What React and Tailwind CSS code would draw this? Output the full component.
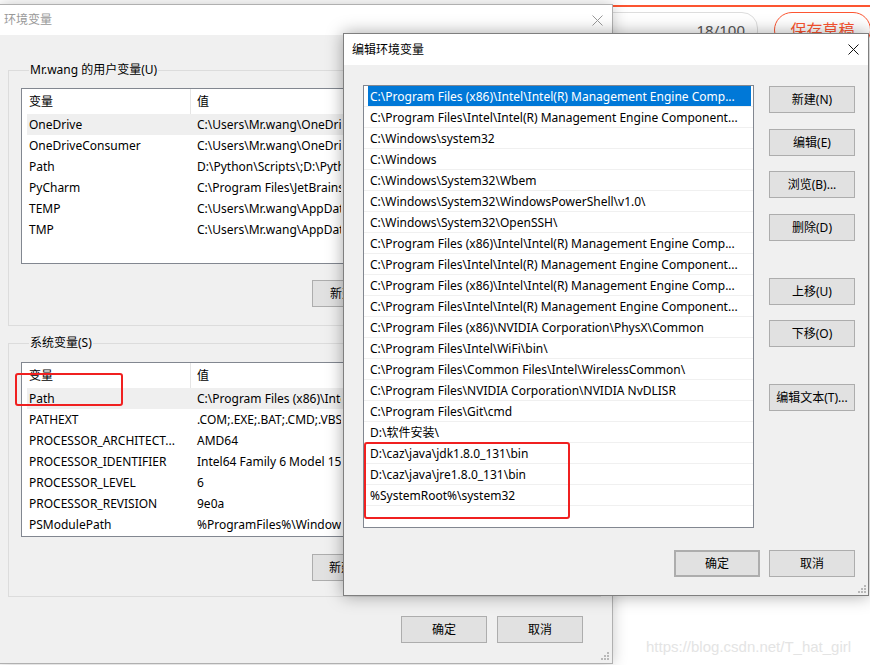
import React from "react";

const FONT = "font-['Noto_Sans','Noto_Sans_CJK_SC',sans-serif]";

const frontPaths = [
  "C:\\Program Files (x86)\\Intel\\Intel(R) Management Engine Comp...",
  "C:\\Program Files\\Intel\\Intel(R) Management Engine Component...",
  "C:\\Windows\\system32",
  "C:\\Windows",
  "C:\\Windows\\System32\\Wbem",
  "C:\\Windows\\System32\\WindowsPowerShell\\v1.0\\",
  "C:\\Windows\\System32\\OpenSSH\\",
  "C:\\Program Files (x86)\\Intel\\Intel(R) Management Engine Comp...",
  "C:\\Program Files\\Intel\\Intel(R) Management Engine Component...",
  "C:\\Program Files (x86)\\Intel\\Intel(R) Management Engine Comp...",
  "C:\\Program Files\\Intel\\Intel(R) Management Engine Component...",
  "C:\\Program Files (x86)\\NVIDIA Corporation\\PhysX\\Common",
  "C:\\Program Files\\Intel\\WiFi\\bin\\",
  "C:\\Program Files\\Common Files\\Intel\\WirelessCommon\\",
  "C:\\Program Files\\NVIDIA Corporation\\NVIDIA NvDLISR",
  "C:\\Program Files\\Git\\cmd",
  "D:\\软件安装\\",
  "D:\\caz\\java\\jdk1.8.0_131\\bin",
  "D:\\caz\\java\\jre1.8.0_131\\bin",
  "%SystemRoot%\\system32",
];

const userVars = [
  ["OneDrive", "C:\\Users\\Mr.wang\\OneDrive"],
  ["OneDriveConsumer", "C:\\Users\\Mr.wang\\OneDrive"],
  ["Path", "D:\\Python\\Scripts\\;D:\\Python\\;"],
  ["PyCharm", "C:\\Program Files\\JetBrains\\PyCharm 2019.1\\bin;"],
  ["TEMP", "C:\\Users\\Mr.wang\\AppData\\Local\\Temp"],
  ["TMP", "C:\\Users\\Mr.wang\\AppData\\Local\\Temp"],
];

const sysVars = [
  ["Path", "C:\\Program Files (x86)\\Intel\\Intel(R) Management"],
  ["PATHEXT", ".COM;.EXE;.BAT;.CMD;.VBS;.VBE;.JS;.JSE;.WSF"],
  ["PROCESSOR_ARCHITECT...", "AMD64"],
  ["PROCESSOR_IDENTIFIER", "Intel64 Family 6 Model 158 Stepping 10"],
  ["PROCESSOR_LEVEL", "6"],
  ["PROCESSOR_REVISION", "9e0a"],
  ["PSModulePath", "%ProgramFiles%\\WindowsPowerShell\\Modules"],
];

function WinButton({ children, className = "" }) {
  return (
    <div
      className={`w-[86px] h-[27px] flex items-center justify-center bg-[#e1e1e1] border border-[#adadad] text-[12px] text-black shrink-0 ${className}`}
    >
      {children}
    </div>
  );
}

function CloseX({ color }) {
  return (
    <svg width="11" height="11" viewBox="0 0 11 11">
      <path d="M0.5 0.5 L10.5 10.5 M10.5 0.5 L0.5 10.5" stroke={color} strokeWidth="1" />
    </svg>
  );
}

function Grip() {
  const dots = [
    [6, 0],
    [3, 3],
    [6, 3],
    [0, 6],
    [3, 6],
    [6, 6],
  ];
  return (
    <svg width="8" height="8" viewBox="0 0 8 8">
      {dots.map(([x, y], i) => (
        <rect key={i} x={x} y={y} width="2" height="2" fill="#b8b8b8" />
      ))}
    </svg>
  );
}

function VarList({ rows, height }) {
  return (
    <div className={`w-[563px] ${height} border border-[#828790] bg-white overflow-hidden`}>
      <div className="h-[25px] flex items-center">
        <div className="ml-[5px] w-[164px] h-full flex items-center pl-[2px] border-r border-[#e5e5e5]">
          变量
        </div>
        <div className="pl-[6px]">值</div>
      </div>
      {rows.map(([n, v], i) => (
        <div
          key={i}
          className={`h-[21px] ml-[5px] flex items-center ${i === 0 ? "bg-[#efefef]" : ""}`}
        >
          <div className="w-[164px] pl-[2px] truncate whitespace-nowrap">{n}</div>
          <div className="pl-[6px] w-[150px] overflow-hidden whitespace-nowrap">{v}</div>
        </div>
      ))}
    </div>
  );
}

export default function App() {
  return (
    <div className={`relative w-[870px] h-[665px] bg-white overflow-hidden text-[12px] text-black ${FONT}`}>
      {/* background web page */}
      <div className="pt-[5px]">
        <div className="h-[2px] bg-[#fc5531]" />
        <div className="flex mt-[5px] pl-[450px] gap-[16px]">
          <div className="w-[308px] h-[36px] rounded-[16px] border border-[#dddddd] flex items-center justify-end pr-[12px] text-[15px] text-[#555555] shrink-0">
            18/100
          </div>
          <div className="w-[97px] h-[36px] rounded-[18px] border border-[#fc5531] flex items-center justify-center text-[16px] text-[#fc5531] shrink-0">
            保存草稿
          </div>
        </div>
      </div>

      {/* back window: 环境变量 */}
      <div className="absolute left-0 top-[4px] w-[613px] h-[660px] bg-[#f0f0f0] border border-l-0 border-[#b0b0b0] shadow-[0_0_14px_rgba(0,0,0,0.22)] flex flex-col">
        <div className="h-[30px] bg-white flex items-center justify-between pl-[4px] pr-[9px] shrink-0">
          <span className="text-[#999999]">环境变量</span>
          <CloseX color="#999999" />
        </div>
        <div className="flex flex-col px-[8px] pt-[27px]">
          <fieldset className="w-[589px] border border-[#dcdcdc] px-[12px] pt-[10px] pb-[18px]">
            <legend className="ml-[8px] px-[1px] leading-[16px]">Mr.wang 的用户变量(U)</legend>
            <VarList rows={userVars} height="h-[176px]" />
            <div className="flex gap-[9px] ml-[291px] mt-[16px]">
              <WinButton>新建(N)...</WinButton>
              <WinButton />
              <WinButton />
            </div>
          </fieldset>
          <fieldset className="w-[589px] mt-[9px] border border-[#dcdcdc] px-[12px] pt-[11px] pb-[15px]">
            <legend className="ml-[8px] px-[1px] leading-[16px]">系统变量(S)</legend>
            <VarList rows={sysVars} height="h-[175px]" />
            <div className="flex gap-[9px] ml-[291px] mt-[17px]">
              <WinButton>新建(W)...</WinButton>
              <WinButton />
              <WinButton />
            </div>
          </fieldset>
          <div className="flex gap-[10px] ml-[393px] mt-[19px]">
            <WinButton>确定</WinButton>
            <WinButton>取消</WinButton>
          </div>
        </div>
        <div className="absolute right-[3px] bottom-[3px]">
          <Grip />
        </div>
      </div>

      {/* annotation on back window */}
      <div className="absolute left-[15px] top-[373px] w-[108px] h-[33px] border-2 border-[#f02020] rounded-[3px]" />

      {/* front dialog: 编辑环境变量 */}
      <div className="absolute left-[343px] top-[33px] w-[526px] h-[563px] bg-[#f0f0f0] border border-[#7f7f7f] shadow-[0_0_16px_rgba(0,0,0,0.35)] flex flex-col">
        <div className="h-[31px] bg-white flex items-center justify-between pl-[8px] pr-[9px] shrink-0">
          <span className="text-black">编辑环境变量</span>
          <CloseX color="#111111" />
        </div>
        <div className="flex flex-col pl-[19px] pt-[20px]">
          <div className="flex">
            <div className="relative w-[391px] h-[443px] border border-[#828790] bg-white overflow-hidden shrink-0">
              {frontPaths.map((p, i) => (
                <div key={i} className="h-[21px] border-b border-[#f0f0f0] flex">
                  <div
                    className={`flex-1 ml-[4px] mr-[2px] h-[20px] flex items-center pl-[2px] pt-[2px] whitespace-nowrap overflow-hidden ${
                      i === 0 ? "bg-[#0078d7] text-white" : "text-black"
                    }`}
                  >
                    {p}
                  </div>
                </div>
              ))}
              <div className="absolute left-0 top-[356px] w-[206px] h-[77px] border-2 border-[#f02020] rounded-[3px]" />
            </div>
            <div className="flex flex-col ml-[15px] mt-[1px]">
              <WinButton>新建(N)</WinButton>
              <WinButton className="mt-[16px]">编辑(E)</WinButton>
              <WinButton className="mt-[15px]">浏览(B)...</WinButton>
              <WinButton className="mt-[16px]">删除(D)</WinButton>
              <WinButton className="mt-[37px]">上移(U)</WinButton>
              <WinButton className="mt-[15px]">下移(O)</WinButton>
              <WinButton className="mt-[37px]">编辑文本(T)...</WinButton>
            </div>
          </div>
          <div className="flex gap-[9px] ml-[311px] mt-[22px]">
            <WinButton className="border-2 border-[#0078d7]">确定</WinButton>
            <WinButton>取消</WinButton>
          </div>
        </div>
        <div className="absolute right-[2px] bottom-[2px]">
          <Grip />
        </div>
      </div>

      {/* watermark */}
      <div className="absolute left-[646px] top-[636px] text-[15px] text-[#e4e4e4] font-['Liberation_Sans',sans-serif] whitespace-nowrap">
        https://blog.csdn.net/T_hat_girl
      </div>
    </div>
  );
}
